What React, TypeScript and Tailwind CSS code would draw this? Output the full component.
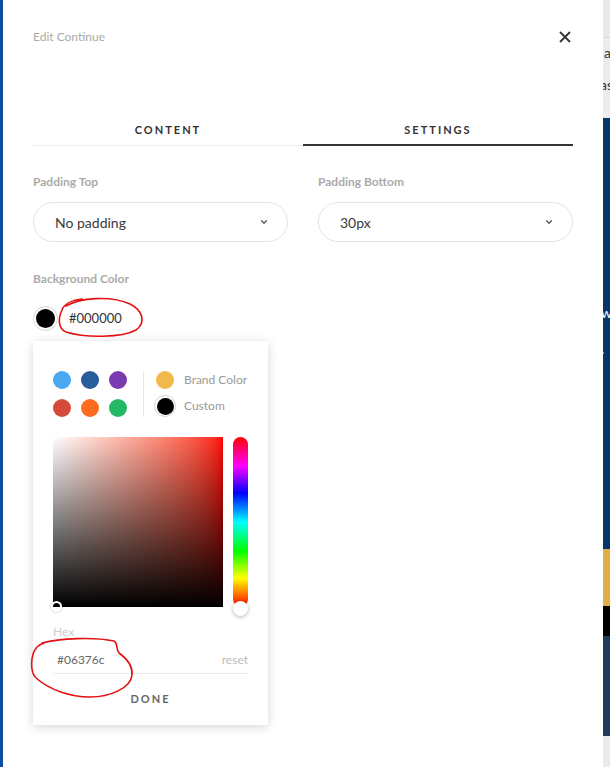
import { ChevronDown } from 'lucide-react';

const presets = ['#4aa8f0', '#275d9c', '#7a3bb0', '#d64a3c', '#ff6a1f', '#22b866'];

const SelectBox = ({ value }: { value: string }) => (
  <div className="flex h-[40px] items-center justify-between rounded-full border border-[#e3e3e3] pl-[21px] pr-[18px]">
    <span className="text-[14px] text-[#3a3a3a]">{value}</span>
    <ChevronDown size={10} strokeWidth={3} className="text-[#555]" />
  </div>
);

const ColorPicker = () => (
  <div className="mt-[10px] flex h-[384px] w-[235px] flex-col bg-white px-[20px] pt-[30px] shadow-[0_2px_10px_rgba(0,0,0,0.16)]">
    {/* swatches */}
    <div className="flex h-[46px] items-stretch">
      <div className="grid grid-cols-3 gap-[10px]">
        {presets.map(c => (
          <div key={c} className="h-[18px] w-[18px] rounded-full" style={{ backgroundColor: c }} />
        ))}
      </div>
      <div className="ml-[16px] w-px bg-[#e6e6e6]" />
      <div className="-mt-[2px] ml-[10px] flex flex-col justify-between text-[12px] text-[#999]">
        <div className="flex items-center gap-[8px]">
          <div className="flex h-[22px] w-[22px] items-center justify-center">
            <div className="h-[18px] w-[18px] rounded-full bg-[#f0b94a]" />
          </div>
          <span>Brand Color</span>
        </div>
        <div className="flex items-center gap-[8px]">
          <div className="flex h-[22px] w-[22px] items-center justify-center rounded-full border border-[#d5d5d5] bg-white">
            <div className="h-[17px] w-[17px] rounded-full bg-black" />
          </div>
          <span>Custom</span>
        </div>
      </div>
    </div>

    {/* saturation + hue */}
    <div className="mt-[20px] flex gap-[10px]">
      <div className="relative h-[170px] w-[170px] bg-linear-to-r from-white to-[#ff0000]">
        <div className="absolute inset-0 bg-linear-to-t from-black to-transparent" />
        <div className="absolute bottom-[-5px] left-[-2px] h-[11px] w-[11px] rounded-full border-[2px] border-white shadow-[0_0_2px_rgba(0,0,0,0.4)]" />
      </div>
      <div className="relative h-[170px] w-[15px] rounded-full bg-[linear-gradient(to_bottom,#f00_0%,#f0f_17%,#00f_33%,#0ff_50%,#0f0_67%,#ff0_83%,#f00_100%)]">
        <div className="absolute bottom-[-9px] left-0 h-[15px] w-[15px] rounded-full bg-white shadow-[0_1px_4px_rgba(0,0,0,0.3)]" />
      </div>
    </div>

    <div className="mt-[18px] text-[12px] leading-[14px] text-[#ccc]">Hex</div>
    <div className="mt-[8px] flex h-[27px] items-center justify-between border-b border-[#ececec] pl-[4px]">
      <span className="text-[12px] text-[#666]">#06376c</span>
      <span className="text-[12px] text-[#bbb]">reset</span>
    </div>
    <div className="mt-[18px] text-center text-[11px] font-bold leading-[14px] tracking-[2px] text-[#666]">DONE</div>
  </div>
);

export default function App() {
  return (
    <div className="relative flex h-[767px] w-[610px] overflow-hidden bg-white font-[Lato,sans-serif]">
      <div className="w-[3px] bg-[#0a4c9e]" />

      <div className="w-[600px] bg-white px-[30px] pt-[28px]">
        <div className="flex h-[18px] items-center justify-between">
          <span className="text-[12px] text-[#aaa]">Edit Continue</span>
          <svg width="12" height="12" viewBox="0 0 12 12" className="mr-[2px]">
            <path d="M1 1 L11 11 M11 1 L1 11" stroke="#333" strokeWidth="1.8" />
          </svg>
        </div>

        <div className="mt-[77px] grid grid-cols-2 items-end text-center text-[11px] font-bold leading-[14px] tracking-[2px] text-[#333]">
          <div className="border-b border-[#eee] pb-[8px]">CONTENT</div>
          <div className="border-b-2 border-[#333] pb-[7px]">SETTINGS</div>
        </div>

        <div className="mt-[29px] grid grid-cols-2 gap-[30px]">
          <div>
            <div className="text-[12px] font-bold leading-[14px] text-[#aaa]">Padding Top</div>
            <div className="mt-[13px]">
              <SelectBox value="No padding" />
            </div>
          </div>
          <div>
            <div className="text-[12px] font-bold leading-[14px] text-[#aaa]">Padding Bottom</div>
            <div className="mt-[13px]">
              <SelectBox value="30px" />
            </div>
          </div>
        </div>

        <div className="mt-[30px] text-[12px] font-bold leading-[14px] text-[#aaa]">Background Color</div>
        <div className="mt-[20px] flex h-[25px] items-center gap-[11px]">
          <div className="flex h-[25px] w-[25px] items-center justify-center rounded-full border border-[#d5d5d5] bg-white">
            <div className="h-[19px] w-[19px] rounded-full bg-black" />
          </div>
          <span className="text-[13px] text-[#333]">#000000</span>
        </div>

        <ColorPicker />
      </div>

      {/* page behind the panel */}
      <div className="flex flex-1 flex-col overflow-hidden text-[14px] leading-none">
        <div className="h-[38px] border-b border-[#d8d8d8] bg-[#e9e9e9]" />
        <div className="h-[80px] bg-[#ececec] text-[#333]">
          <div className="mt-[8px] pl-[1px]">a</div>
          <div className="mt-[18px] -ml-[3px]">as</div>
        </div>
        <div className="h-[431px] bg-[#06376c] text-white">
          <div className="mt-[188px] -ml-[2px]">w</div>
          <div className="mt-[22px] -ml-[2px]">.</div>
        </div>
        <div className="h-[57px] bg-[#dfae48]" />
        <div className="h-[30px] bg-black" />
        <div className="h-[100px] bg-[#1f3b57]" />
        <div className="flex-1 bg-[#eaeaea]" />
      </div>

      {/* red hand-drawn annotations */}
      <svg className="pointer-events-none absolute inset-0" width="610" height="767" viewBox="0 0 610 767" fill="none">
        <path
          d="M66 306 C80 298, 110 295, 130 304 C142 310, 147 322, 136 330 C122 338, 85 338, 66 332 C58 329, 58 318, 62 310 C64 304, 72 300, 82 299"
          stroke="#e41010"
          strokeWidth="1.6"
          strokeLinecap="round"
        />
        <path
          d="M42 643 C60 638, 95 637, 114 641 C118 643, 116 650, 119 653 C126 658, 133 665, 132 675 C131 688, 110 697, 90 697 C70 697, 50 690, 36 678 C30 672, 30 655, 37 647 C39 645, 41 644, 44 643"
          stroke="#e41010"
          strokeWidth="1.6"
          strokeLinecap="round"
        />
      </svg>
    </div>
  );
}
